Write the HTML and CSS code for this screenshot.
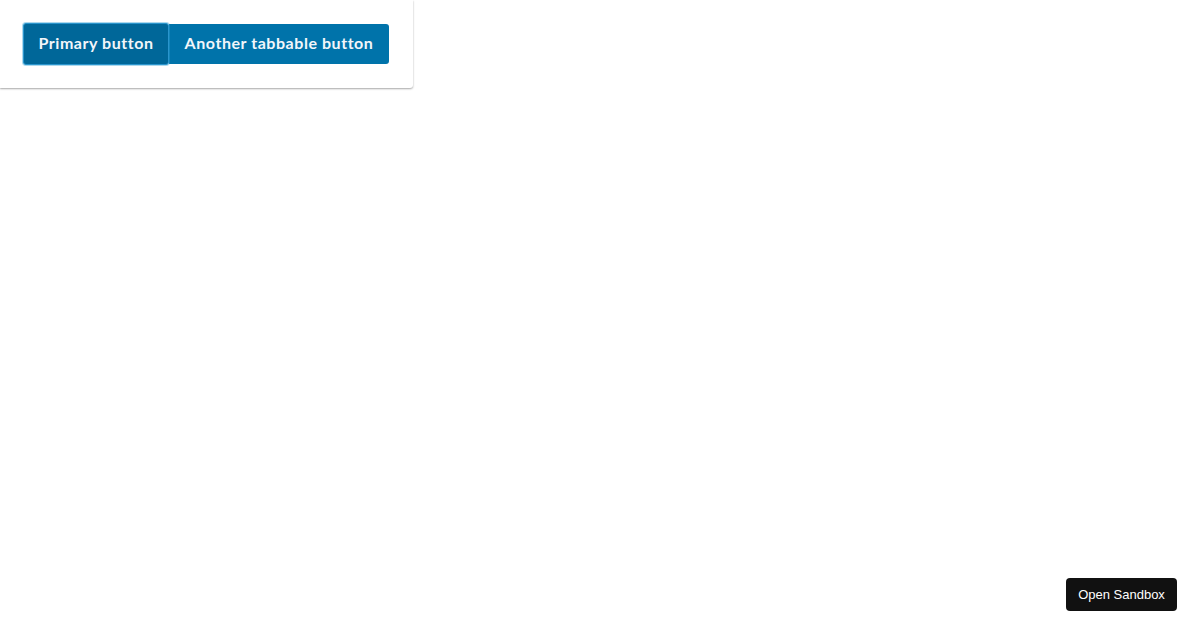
FILE: index.html
```html
<!DOCTYPE html>
<html>
<head>
<meta charset="utf-8">
<link rel="stylesheet" href="styles.css">
</head>
<body>
<div class="card">
  <div class="group">
    <button class="btn btn-focus">Primary button</button>
    <button class="btn btn-second">Another tabbable button</button>
  </div>
</div>
<a class="sandbox">Open Sandbox</a>
</body>
</html>
```
FILE: styles.css
```css
html, body {
  margin: 0;
  padding: 0;
  background: #fff;
  width: 1200px;
  height: 630px;
  overflow: hidden;
}
.card {
  display: inline-flex;
  width: 413px;
  height: 88px;
  box-sizing: border-box;
  padding: 24px 24px 24px 23px;
  background: #fff;
  box-shadow: 0 1px 2px rgba(0,0,0,0.35);
  border-radius: 0 0 3px 0;
}
.group {
  display: flex;
  align-items: center;
  height: 40px;
}
.btn {
  font-family: Lato, "Open Sans", sans-serif;
  font-weight: 700;
  font-size: 16px;
  letter-spacing: 0.55px;
  line-height: 38px;
  color: #f2f6fa;
  background: #0073aa;
  border: none;
  height: 40px;
  padding: 0 0 2px;
  margin: 0;
  border-radius: 0 3px 3px 0;
  cursor: pointer;
}
.btn-second {
  width: 220px;
}
.btn-focus {
  background: #006799;
  height: 42px;
  width: 146px;
  border: 1px solid #2a95cd;
  border-radius: 3px;
  box-shadow: 0 0 0 1px rgba(51,160,210,0.4);
  position: relative;
  z-index: 1;
}
.sandbox {
  position: absolute;
  right: 23px;
  bottom: 19px;
  width: 111px;
  height: 33px;
  display: flex;
  align-items: center;
  justify-content: center;
  background: #111;
  color: #fff;
  font-family: "Liberation Sans", Arial, sans-serif;
  font-size: 13px;
  border-radius: 4px;
}
```
